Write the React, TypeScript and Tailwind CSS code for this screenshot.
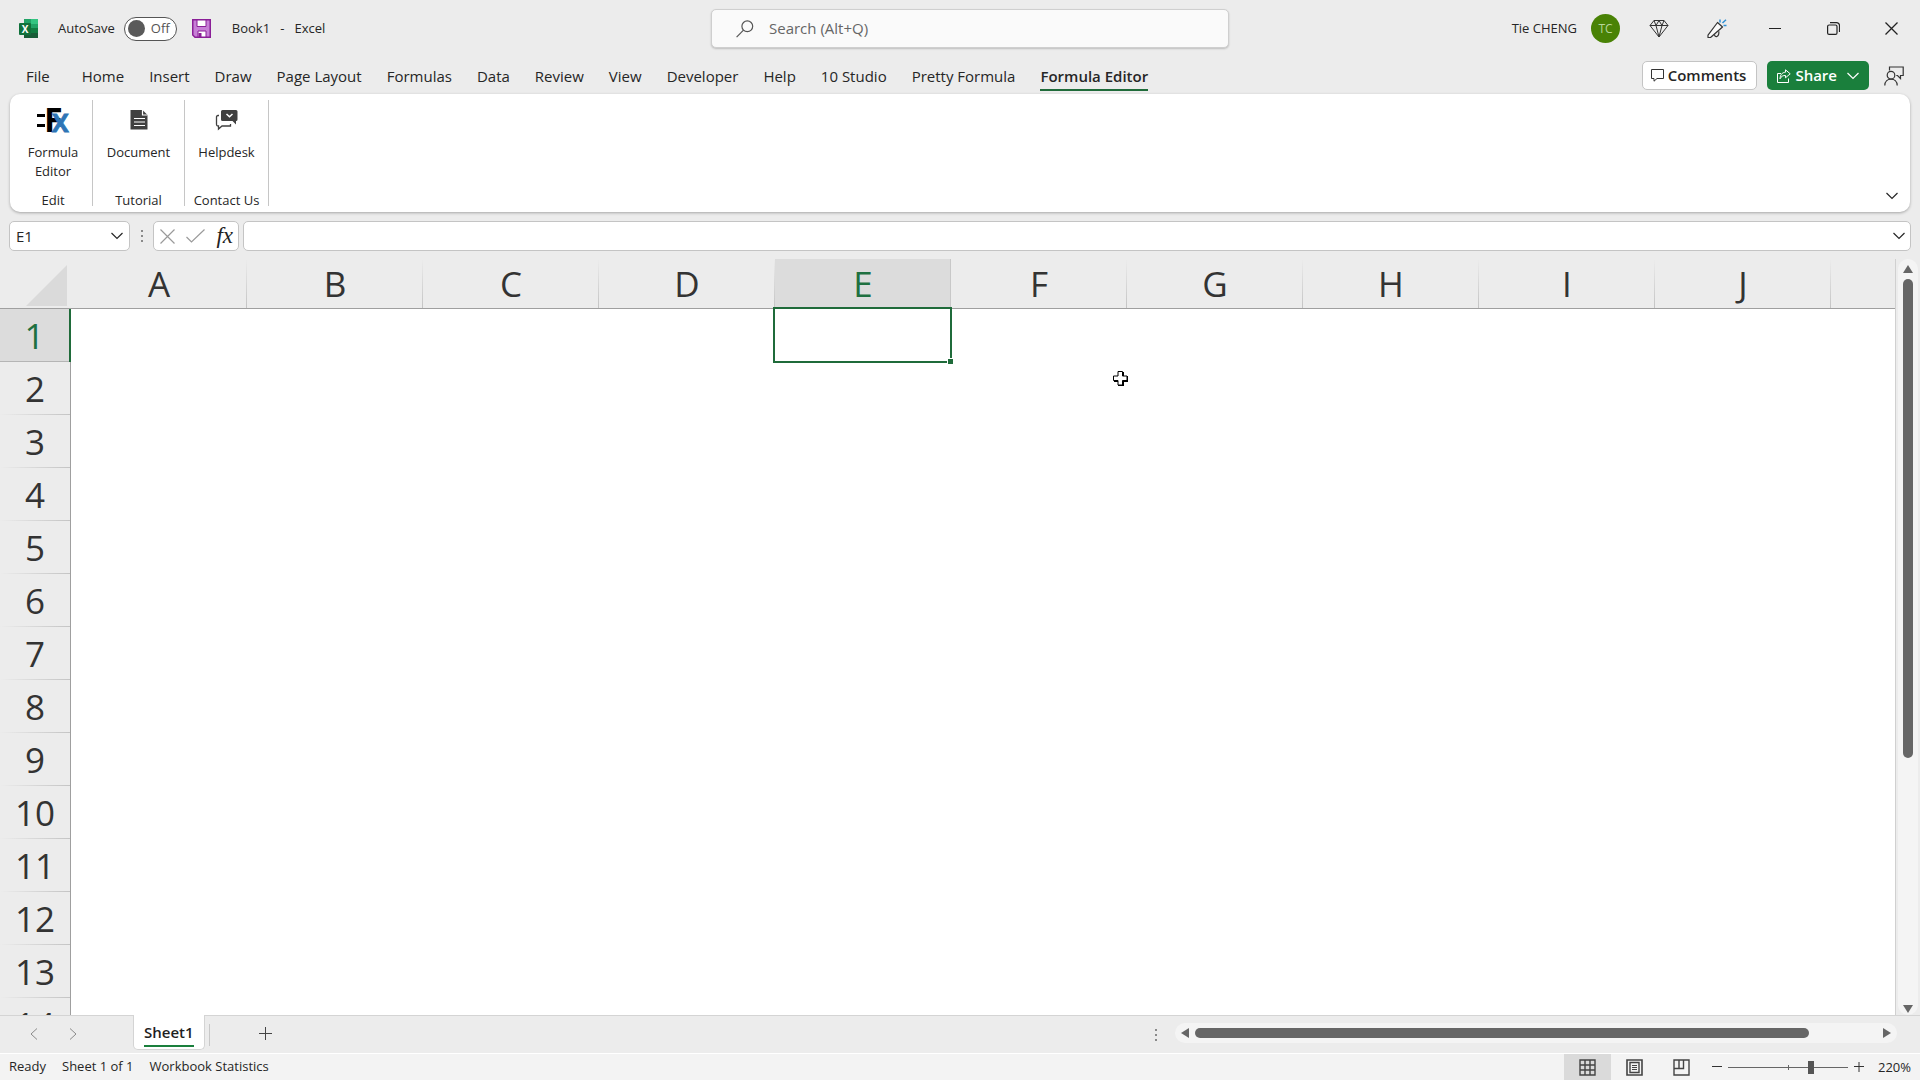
import clsx from "clsx";
import React, { FC, ReactNode, useState } from "react";

const ribbonTabs = [
    "File",
    "Home",
    "Insert",
    "Draw",
    "Page Layout",
    "Formulas",
    "Data",
    "Review",
    "View",
    "Developer",
    "Help",
    "10 Studio",
    "Pretty Formula",
    "Formula Editor",
];

const columns = ["A", "B", "C", "D", "E", "F", "G", "H", "I", "J"];
const rows = Array.from({ length: 14 }, (_, i) => i + 1);

const App: FC = () => {
    return (
        <div className="flex h-screen flex-col overflow-hidden bg-[#ececec] font-['Open_Sans','Noto_Sans',sans-serif] text-[#262626]">
            <TitleBar />
            <RibbonTabs />
            <Ribbon />
            <FormulaBar />
            <div className="flex min-h-0 flex-1 pt-2">
                <Sheet />
                <VerticalScroll />
            </div>
            <SheetBar />
            <StatusBar />
        </div>
    );
};

export default App;

const TitleBar: FC = () => {
    const [autoSave, setAutoSave] = useState(false);

    return (
        <header className="grid h-[57px] shrink-0 grid-cols-[711fr_518fr_691fr] items-center text-[13px]">
            <div className="flex items-center pl-[19px]">
                <ExcelLogo />
                <span id="autosave" className="ml-5">
                    AutoSave
                </span>
                <button
                    role="switch"
                    aria-checked={autoSave}
                    aria-labelledby="autosave"
                    onClick={() => setAutoSave((p) => !p)}
                    className="ml-[9px] flex h-6 w-[53px] items-center gap-1.5 rounded-full border border-[#555] bg-white pl-[3px] text-[#555]"
                >
                    <span className="size-[17px] rounded-full bg-[#5a5a5a]" />
                    Off
                </button>
                <button aria-label="Save" className="ml-[15px]">
                    <SaveIcon />
                </button>
                <span className="ml-[21px] whitespace-pre">
                    {"Book1   -   Excel"}
                </span>
            </div>
            <label className="flex h-[39px] items-center gap-[15px] rounded-[5px] border border-[#cfcfcf] bg-[#fafafa] pl-6 shadow-[0_1px_2px_rgba(0,0,0,0.2)]">
                <SearchIcon />
                <input
                    type="text"
                    aria-label="Search"
                    placeholder="Search (Alt+Q)"
                    className="w-full bg-transparent text-[15px] outline-none placeholder:text-[#666]"
                />
            </label>
            <div className="flex items-center justify-end">
                <span>Tie CHENG</span>
                <span className="mr-[10px] ml-[14px] flex size-[29px] items-center justify-center rounded-full bg-[#498205] text-xs text-[#b7d69a]">
                    TC
                </span>
                <WindowButton label="Premium">
                    <DiamondIcon />
                </WindowButton>
                <WindowButton label="Coming Soon">
                    <MegaphoneIcon />
                </WindowButton>
                <WindowButton label="Minimize">
                    <svg width="12" height="12" viewBox="0 0 12 12">
                        <path d="M0 5.5h12" stroke="#222" />
                    </svg>
                </WindowButton>
                <WindowButton label="Restore">
                    <svg
                        width="13"
                        height="13"
                        viewBox="0 0 13 13"
                        fill="none"
                        stroke="#222"
                        strokeWidth="1.2"
                    >
                        <rect x="0.6" y="3" width="9.4" height="9.4" rx="1.5" />
                        <path d="M3 0.6h6.5a3 3 0 0 1 3 3V10" />
                    </svg>
                </WindowButton>
                <WindowButton label="Close">
                    <svg width="13" height="13" viewBox="0 0 13 13">
                        <path
                            d="M0.5 0.5l12 12M12.5 0.5l-12 12"
                            stroke="#222"
                            strokeWidth="1.3"
                        />
                    </svg>
                </WindowButton>
            </div>
        </header>
    );
};

type WindowButtonProps = {
    label: string;
    children: ReactNode;
};

const WindowButton: FC<WindowButtonProps> = ({ label, children }) => (
    <button
        aria-label={label}
        className="flex h-10 w-[58px] items-center justify-center"
    >
        {children}
    </button>
);

const RibbonTabs: FC = () => {
    const [current, setCurrent] = useState("Formula Editor");

    return (
        <nav className="flex h-[37px] shrink-0 items-center pr-4 pl-[26px] text-[15px]">
            <div className="flex gap-[25px]">
                {ribbonTabs.map((tab) => (
                    <button
                        key={tab}
                        onClick={() => setCurrent(tab)}
                        className={clsx(
                            "border-b-2 pt-[3px] pb-px leading-6",
                            tab == "File" && "mr-[7px]",
                            tab == current
                                ? "border-[#1f6b3a] font-semibold"
                                : "border-transparent",
                        )}
                    >
                        {tab}
                    </button>
                ))}
            </div>
            <div className="ml-auto flex items-center font-semibold">
                <button className="flex h-[29px] items-center gap-1 rounded-[5px] border border-[#c4c4c4] bg-white px-2">
                    <CommentIcon />
                    <span className="mr-0.5">Comments</span>
                </button>
                <button className="ml-[10px] flex h-[29px] items-center rounded-[5px] bg-[#1a7f3c] px-[10px] text-white">
                    <ShareIcon />
                    <span className="mr-[10px] ml-1">Share</span>
                    <Chevron className="w-3" />
                </button>
                <button aria-label="Catch up" className="ml-[15px]">
                    <PersonIcon />
                </button>
            </div>
        </nav>
    );
};

const Ribbon: FC = () => (
    <section className="mx-[10px] flex h-[118px] shrink-0 rounded-[10px] bg-white text-[13px] shadow-[0_1px_3px_rgba(0,0,0,0.3)]">
        <RibbonGroup caption="Edit" className="w-[83px] pl-1">
            <FormulaEditorIcon />
            <span className="w-16">Formula Editor</span>
        </RibbonGroup>
        <RibbonGroup caption="Tutorial" className="w-[92px]">
            <DocumentIcon />
            Document
        </RibbonGroup>
        <RibbonGroup caption="Contact Us" className="w-[84px]">
            <HelpdeskIcon />
            Helpdesk
        </RibbonGroup>
        <button
            aria-label="Ribbon display options"
            className="mt-auto mr-3 mb-3 ml-auto"
        >
            <Chevron className="w-3" />
        </button>
    </section>
);

type RibbonGroupProps = {
    caption: string;
    className: string;
    children: ReactNode;
};

const RibbonGroup: FC<RibbonGroupProps> = ({
    caption,
    className,
    children,
}) => (
    <div
        className={clsx(
            "my-1.5 flex flex-col items-center border-r border-[#c6c6c6]",
            className,
        )}
    >
        <button className="flex flex-col items-center gap-2.5 pt-[7px] leading-[19px]">
            {children}
        </button>
        <span className="mt-auto leading-3">{caption}</span>
    </div>
);

const FormulaBar: FC = () => (
    <div className="mt-[9px] flex h-[30px] shrink-0 items-stretch pr-[9px] pl-[9px]">
        <div className="flex w-[121px] items-center rounded-[5px] border border-[#c4c4c4] bg-white pr-1.5 pl-1.5">
            <input
                type="text"
                aria-label="Name Box"
                defaultValue="E1"
                className="w-full min-w-0 text-[15px] outline-none"
            />
            <button aria-label="Named cells">
                <Chevron className="w-3" />
            </button>
        </div>
        <Dots className="mr-[9px] ml-[10px]" />
        <div className="flex w-[86px] items-center justify-between rounded-[5px] border border-[#c4c4c4] bg-white pr-[5px] pl-1.5">
            <button aria-label="Cancel">
                <svg width="15" height="15" viewBox="0 0 15 15">
                    <path
                        d="M0.5 0.5l14 14M14.5 0.5l-14 14"
                        stroke="#9a9a9a"
                        strokeWidth="1.2"
                    />
                </svg>
            </button>
            <button aria-label="Enter">
                <svg width="19" height="14" viewBox="0 0 19 14" fill="none">
                    <path
                        d="M0.5 8l5 5L18.5 0.5"
                        stroke="#9a9a9a"
                        strokeWidth="1.2"
                    />
                </svg>
            </button>
            <button
                aria-label="Insert function"
                className="font-['Liberation_Serif',serif] text-[23px] leading-6 text-[#222] italic"
            >
                fx
            </button>
        </div>
        <div className="ml-1 flex flex-1 items-center rounded-[5px] border border-[#c4c4c4] bg-white pr-[5px]">
            <input
                type="text"
                aria-label="Formula Bar"
                className="w-full px-2 text-[15px] outline-none"
            />
            <button aria-label="Expand formula bar">
                <Chevron className="w-3" />
            </button>
        </div>
    </div>
);

const Sheet: FC = () => (
    <main className="min-w-0 flex-1 overflow-hidden border-r border-[#d0d0d0] bg-white">
        <table className="w-full table-fixed border-separate border-spacing-0 text-[35px] leading-[49px] text-[#333]">
            <colgroup>
                <col className="w-[71px]" />
                {columns.map((column) => (
                    <col key={column} className="w-[176px]" />
                ))}
                <col />
            </colgroup>
            <thead>
                <tr className="h-[50px] bg-[#ececec]">
                    <td className="border-b border-[#9f9f9f] p-0">
                        <svg
                            className="mt-[3px] ml-[26px]"
                            width="41"
                            height="41"
                            viewBox="0 0 41 41"
                        >
                            <path d="M41 0v41H0z" fill="#dadada" />
                        </svg>
                    </td>
                    {columns.map((column) => (
                        <th
                            key={column}
                            scope="col"
                            className={clsx(
                                "border-b border-[#9f9f9f] bg-linear-to-b bg-[length:1px_100%] bg-right bg-no-repeat p-0 font-normal",
                                column == "E"
                                    ? "bg-[#dcdcdc] from-[#c8c8c8] to-[#c8c8c8] text-[#1f7040]"
                                    : "from-transparent to-[#c4c4c4]",
                            )}
                        >
                            {column}
                        </th>
                    ))}
                    <td className="border-b border-[#9f9f9f]" />
                </tr>
            </thead>
            <tbody>
                {rows.map((row) => (
                    <tr key={row} className="h-[53px]">
                        <th
                            scope="row"
                            className={clsx(
                                "bg-linear-to-r bg-[length:100%_1px] bg-bottom bg-no-repeat p-0 font-normal",
                                row == 1
                                    ? "border-r-2 border-[#1f6b3a] bg-[#dcdcdc] from-[#b5b5b5] to-[#b5b5b5] text-[#1f7040]"
                                    : "border-r border-[#9f9f9f] bg-[#ececec] from-transparent to-[#c4c4c4]",
                            )}
                        >
                            {row}
                        </th>
                        {columns.map((column) => (
                            <td key={column} className="relative p-0">
                                {column == "E" && row == 1 && (
                                    <div className="absolute -top-[2px] -right-px -bottom-px -left-[2px] border-2 border-[#1f6b3a]">
                                        <span className="absolute -right-[4px] -bottom-[4px] size-[7px] border border-white bg-[#1f6b3a]" />
                                    </div>
                                )}
                                {column == "F" && row == 2 && (
                                    <CellCursor className="absolute top-[9px] -right-[1px]" />
                                )}
                            </td>
                        ))}
                        <td />
                    </tr>
                ))}
            </tbody>
        </table>
    </main>
);

const VerticalScroll: FC = () => (
    <div className="mx-0.5 flex w-5 flex-col items-center gap-1.5 rounded-full bg-[#f4f4f4] py-1.5">
        <svg width="10" height="8" viewBox="0 0 10 8">
            <path d="M5 0l5 8H0z" fill="#666" />
        </svg>
        <div className="flex w-[10px] flex-1 flex-col">
            <div className="h-[66.5%] rounded-full bg-[#666]" />
        </div>
        <svg className="-mb-1" width="10" height="8" viewBox="0 0 10 8">
            <path d="M5 8l5-8H0z" fill="#666" />
        </svg>
    </div>
);

const SheetBar: FC = () => (
    <div className="flex h-[38px] shrink-0 border-t border-[#d4d4d4]">
        <div className="flex items-center gap-[31px] pb-0.5 pl-[30px]">
            <button aria-label="Previous sheet">
                <svg width="8" height="12" viewBox="0 0 8 12" fill="none">
                    <path d="M7 0.5L1 6l6 5.5" stroke="#8a8a8a" />
                </svg>
            </button>
            <button aria-label="Next sheet">
                <svg width="8" height="12" viewBox="0 0 8 12" fill="none">
                    <path d="M1 0.5L7 6l-6 5.5" stroke="#8a8a8a" />
                </svg>
            </button>
        </div>
        <button className="-mt-px ml-14 h-[35px] rounded-b-[5px] border border-t-0 border-[#d4d4d4] bg-white px-[10px] text-[15px] font-semibold text-[#1f1f1f]">
            <span className="block border-b-2 border-[#1a7f3c] pt-0.5 pb-px leading-6">
                Sheet1
            </span>
        </button>
        <span className="mt-2 ml-1 h-[22px] w-px bg-[#c8c8c8]" />
        <button aria-label="New sheet" className="ml-[49px] pb-0.5">
            <svg width="13" height="13" viewBox="0 0 13 13">
                <path d="M0 6.5h13M6.5 0v13" stroke="#444" />
            </svg>
        </button>
        <Dots className="mr-[17px] ml-auto" />
        <div className="mt-[7px] mr-[23px] flex h-5 w-[722px] items-center gap-1.5 rounded-full bg-[#f4f4f4] px-1.5">
            <svg width="8" height="10" viewBox="0 0 8 10">
                <path d="M0 5l8-5v10z" fill="#666" />
            </svg>
            <div className="flex-1">
                <div className="h-[10px] w-[90%] rounded-full bg-[#666]" />
            </div>
            <svg width="8" height="10" viewBox="0 0 8 10">
                <path d="M8 5L0 0v10z" fill="#666" />
            </svg>
        </div>
    </div>
);

const StatusBar: FC = () => (
    <footer className="flex h-[27px] shrink-0 items-stretch border-t border-white bg-[#f3f3f3] pr-[9px] pl-[9px] text-[13px] leading-6">
        <span>Ready</span>
        <span className="ml-4">Sheet 1 of 1</span>
        <button className="ml-4 self-start">Workbook Statistics</button>
        <div className="ml-auto flex items-center">
            <button
                aria-label="Normal"
                className="flex h-full w-[47px] items-center justify-center bg-[#dadada]"
            >
                <svg
                    width="17"
                    height="17"
                    viewBox="0 0 17 17"
                    fill="none"
                    stroke="#444"
                    strokeWidth="1.4"
                >
                    <path d="M1 1h15v15H1zM6 1v15M11 1v15M1 6h15M1 11h15" />
                </svg>
            </button>
            <button
                aria-label="Page Layout"
                className="flex h-full w-[47px] items-center justify-center"
            >
                <svg
                    width="17"
                    height="17"
                    viewBox="0 0 17 17"
                    fill="none"
                    stroke="#444"
                >
                    <path d="M1 1h15v15H1z" strokeWidth="1.6" />
                    <path d="M4 3.5h9v10H4z" strokeWidth="1.4" />
                    <path d="M6 6.5h5M6 8.5h5M6 10.5h5" />
                </svg>
            </button>
            <button
                aria-label="Page Break Preview"
                className="flex h-full w-[47px] items-center justify-center"
            >
                <svg
                    width="17"
                    height="17"
                    viewBox="0 0 17 17"
                    fill="none"
                    stroke="#444"
                    strokeWidth="1.4"
                >
                    <path d="M1 1h15v15H1zM1 9.5h9.5V1M6 1v8.5" />
                </svg>
            </button>
            <button aria-label="Zoom out" className="ml-[7px]">
                <svg width="10" height="10" viewBox="0 0 10 10">
                    <path d="M0 4.5h10" stroke="#333" />
                </svg>
            </button>
            <div className="relative mr-1.5 ml-1.5 flex items-center">
                <span className="absolute left-1/2 h-[5px] w-px bg-[#666]" />
                <input
                    type="range"
                    aria-label="Zoom"
                    min={0}
                    max={100}
                    defaultValue={70}
                    className="h-px w-[120px] appearance-none bg-[#666] [&::-webkit-slider-thumb]:h-[13px] [&::-webkit-slider-thumb]:w-1.5 [&::-webkit-slider-thumb]:appearance-none [&::-webkit-slider-thumb]:bg-[#555]"
                />
            </div>
            <button aria-label="Zoom in">
                <svg width="10" height="10" viewBox="0 0 10 10">
                    <path d="M0 4.5h10M5 0v10" stroke="#333" />
                </svg>
            </button>
            <span className="ml-[14px]">220%</span>
        </div>
    </footer>
);

type IconProps = {
    className?: string;
};

const Chevron: FC<IconProps> = ({ className }) => (
    <svg
        className={className}
        viewBox="0 0 12 8"
        fill="none"
        stroke="currentColor"
        strokeWidth="1.2"
    >
        <path d="M0.5 1L6 6.5 11.5 1" />
    </svg>
);

const Dots: FC<IconProps> = ({ className }) => (
    <svg
        className={clsx("self-center", className)}
        width="4"
        height="12"
        viewBox="0 0 4 12"
        fill="#8a8a8a"
    >
        <path d="M1 0h2v2H1zM1 5h2v2H1zM1 10h2v2H1z" />
    </svg>
);

const ExcelLogo: FC = () => (
    <svg width="19" height="19" viewBox="0 0 19 19">
        <path d="M5 0h7v5H5z" fill="#21a366" />
        <path d="M12 0h7v5h-7z" fill="#33c481" />
        <path d="M5 5h7v9H5z" fill="#107c41" />
        <path d="M12 5h7v4h-7z" fill="#21a366" />
        <path d="M12 9h7v5h-7z" fill="#107c41" />
        <path d="M5 14h14v5H5z" fill="#185c37" />
        <rect x="0" y="4" width="12" height="12" rx="1" fill="#10713b" />
        <text
            x="6"
            y="13.5"
            textAnchor="middle"
            fontFamily="Open Sans"
            fontWeight="700"
            fontSize="10"
            fill="#fff"
        >
            X
        </text>
    </svg>
);

const SaveIcon: FC = () => (
    <svg width="19" height="19" viewBox="0 0 19 19">
        <path
            d="M0.75 0.75h17.5v17.5H3L0.75 16z"
            fill="#c77fd6"
            stroke="#8a1f97"
            strokeWidth="1.5"
        />
        <path d="M5 1h9v6.5H5z" fill="#fff" stroke="#8a1f97" />
        <path d="M6 12h8v6H6z" fill="#fff" stroke="#8a1f97" />
        <path d="M6.5 14h3v4h-3z" fill="#8a1f97" />
    </svg>
);

const SearchIcon: FC = () => (
    <svg
        className="shrink-0"
        width="18"
        height="18"
        viewBox="0 0 18 18"
        fill="none"
        stroke="#555"
        strokeWidth="1.2"
    >
        <circle cx="11.3" cy="6.3" r="5.4" />
        <path d="M7.5 10.2L0.6 17.2" />
    </svg>
);

const DiamondIcon: FC = () => (
    <svg
        width="20"
        height="19"
        viewBox="0 0 20 19"
        fill="none"
        stroke="#333"
        strokeLinejoin="round"
    >
        <path d="M5 1.5h10l4 5-9 11.5L1 6.5zM1 6.5h18M5 1.5l2 5L10 18l3-11.5 2-5M7 6.5l3-5 3 5" />
    </svg>
);

const MegaphoneIcon: FC = () => (
    <svg
        width="20"
        height="20"
        viewBox="0 0 20 20"
        fill="none"
        stroke="#333"
        strokeWidth="1.2"
        strokeLinejoin="round"
    >
        <path d="M10.5 3.5l5 4.5L3.5 18.5 1 18.5v-2.3z" fill="#fafafa" />
        <path d="M7.5 15.5c0 3.5 5 3 4.3-3.2" />
        <path
            d="M13 3.5V0.5M15.5 4L19 0.8M16.5 6.5h3"
            stroke="#2f8fd3"
            strokeWidth="1.5"
        />
    </svg>
);

const CommentIcon: FC = () => (
    <svg width="13" height="13" viewBox="0 0 13 13" fill="none" stroke="#333">
        <path d="M0.5 0.5h12v9H6L3 12.2V9.5H0.5z" />
    </svg>
);

const ShareIcon: FC = () => (
    <svg width="14" height="14" viewBox="0 0 14 14" fill="none" stroke="#fff">
        <path d="M4 4.5H0.5v9h11V9.5" />
        <path
            d="M8.5 0.8L13.2 4.8 8.5 8.8V6.5C6 6.3 4.3 7.3 3 9.8 3.2 6 5 3.4 8.5 3.2z"
            strokeLinejoin="round"
        />
    </svg>
);

const PersonIcon: FC = () => (
    <svg
        width="20"
        height="20"
        viewBox="0 0 20 20"
        fill="none"
        stroke="#333"
        strokeWidth="1.2"
    >
        <path d="M5.5 4.5V1h13.7v8.5h-2.7v3l-3-3h-1.2" />
        <circle cx="7" cy="9.2" r="3.8" />
        <path d="M0.8 19.5c0-8.5 12.4-8.5 12.4 0" />
    </svg>
);

const FormulaEditorIcon: FC = () => (
    <svg
        className="overflow-visible"
        width="32"
        height="26"
        viewBox="0 0 32 26"
        fontFamily="Open Sans"
        fontWeight="700"
    >
        <path d="M0 7h8v3H0zM0 17h8v3H0z" fill="#000" />
        <text x="7" y="25" fontSize="34" fill="#000">
            F
        </text>
        <text
            x="15"
            y="25"
            fontSize="25"
            fill="#2e75b6"
            stroke="#2e75b6"
            strokeWidth="0.8"
        >
            X
        </text>
    </svg>
);

const DocumentIcon: FC = () => (
    <svg width="18" height="26" viewBox="0 0 18 26">
        <path d="M0.5 3h12l5 5v14.5h-17z" fill="#404040" />
        <path
            d="M12.5 3v5h5M4 11.5h11M4 15h11M4 18.5h11"
            fill="none"
            stroke="#fff"
            strokeWidth="1.2"
        />
    </svg>
);

const HelpdeskIcon: FC = () => (
    <svg width="24" height="26" viewBox="0 0 24 26">
        <path
            d="M7.5 3h13.5q1.5 0 1.5 1.5v8q0 1.5-1.5 1.5v3.5L17.5 14H7.5Q6 14 6 12.5v-8Q6 3 7.5 3z"
            fill="#404040"
        />
        <path
            d="M11.5 7l3 2.8 3-2.8"
            fill="none"
            stroke="#fff"
            strokeWidth="1.5"
        />
        <path
            d="M4 8.5H3Q1.5 8.5 1.5 10v7.5Q1.5 19 3 19h.5v3l3.5-3h8.5v-2"
            fill="none"
            stroke="#404040"
            strokeWidth="1.3"
        />
    </svg>
);

const CellCursor: FC<IconProps> = ({ className }) => (
    <svg className={className} width="15" height="15" viewBox="0 0 15 15">
        <path d="M6 1h5v4h4v6h-4v4H5v-4H1V6h5z" fill="#000" />
        <path
            d="M5 0.5h4.5V5H14v4.5H9.5V14H5V9.5H0.5V5H5z"
            fill="#fff"
            stroke="#000"
        />
    </svg>
);
